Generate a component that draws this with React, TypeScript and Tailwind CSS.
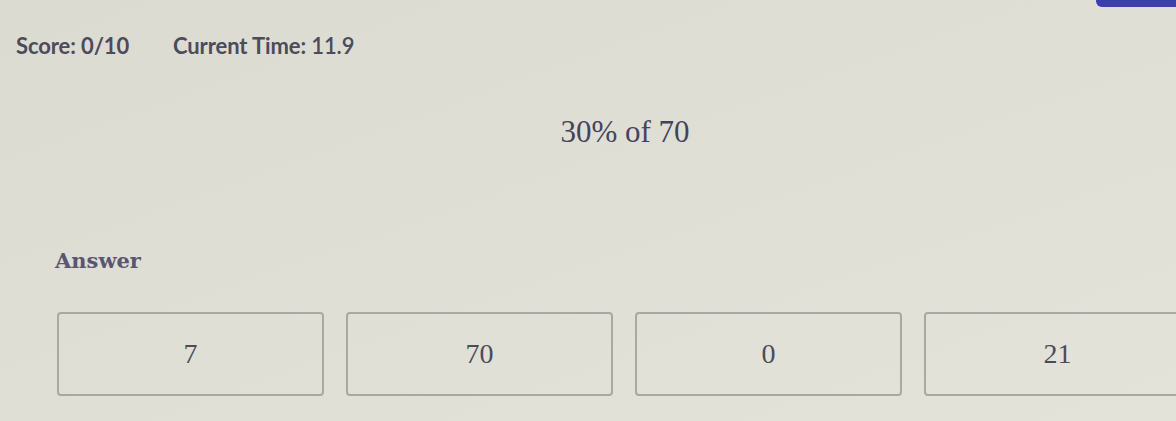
import React from "react"

const choices = ["7", "70", "0", "21"]

export default function App() {
  return (
    <div className="h-[421px] w-[1176px] overflow-hidden bg-gradient-to-br from-[#dcdbd1] via-[#e0dfd6] to-[#e4e3da]">
      <div className="flex h-[7px] justify-end">
        <div className="mr-[-10px] h-[7px] w-[90px] rounded-b-md bg-[#3c3fae]" />
      </div>

      <div
        className="mt-[22px] flex items-center pl-[16px] text-[22px] font-bold tracking-[-0.1px] text-[#4b4b5c]"
        style={{ fontFamily: "Lato, 'Open Sans', sans-serif" }}
      >
        <span className="w-[157px] shrink-0">Score: 0/10</span>
        <span>
          Current Time: <span className="font-semibold">11.9</span>
        </span>
      </div>

      <div
        className="mt-[47px] flex justify-center pl-[74px] text-[31px] text-[#44435e]"
        style={{ fontFamily: "'Liberation Serif', 'DejaVu Serif', serif" }}
      >
        30% of 70
      </div>

      <div
        className="mt-[89px] pl-[55px] font-bold text-[#5a5672]"
        style={{ fontFamily: "'DejaVu Serif', 'Liberation Serif', serif" }}
      >
        <span className="text-[21px]">Answer</span>
      </div>

      <div className="mt-[36px] flex gap-[22px] pl-[57px]">
        {choices.map((c) => (
          <button
            key={c}
            type="button"
            className="flex h-[84px] w-[267px] shrink-0 items-center justify-center rounded-[4px] border-2 border-[#a9a8a3] text-[28px] text-[#4c4b5c]"
            style={{ fontFamily: "'Liberation Serif', 'DejaVu Serif', serif" }}
          >
            {c}
          </button>
        ))}
      </div>
    </div>
  )
}
